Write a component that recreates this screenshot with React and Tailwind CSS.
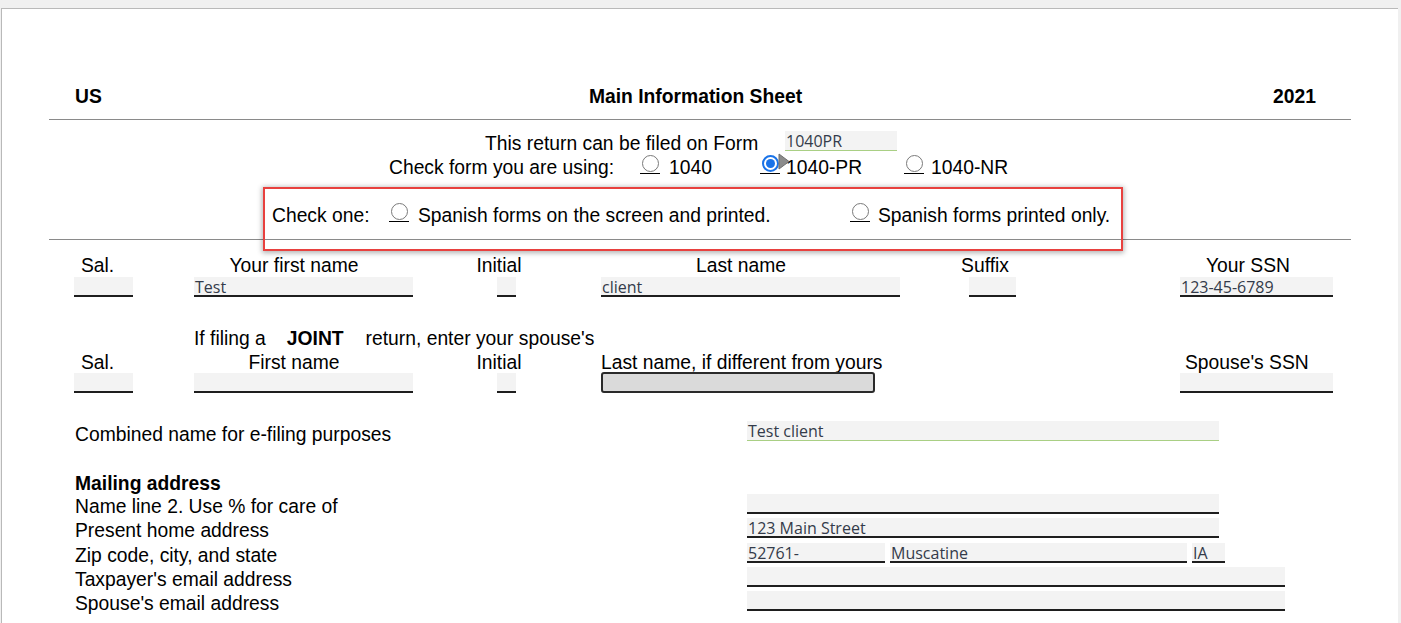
const sans = { fontFamily: '"Liberation Sans", Arial, sans-serif' }

function Field({ w, value, green, className = '' }) {
  return (
    <div
      className={`h-[20px] bg-[#f3f3f3] pl-[1px] text-[16px] leading-[20px] text-[#343b4a] whitespace-nowrap ${
        green ? 'border-b border-[#a9cf84]' : 'border-b-2 border-[#1e1e1e]'
      } ${w} ${className}`}
      style={{ fontFamily: '"Open Sans", "Noto Sans", sans-serif' }}
    >
      {value}
    </div>
  )
}

function Radio({ checked }) {
  return (
    <span className="inline-flex justify-center self-start w-[20px] border-b border-black pb-[1px]">
      {checked ? (
        <span className="w-[17px] h-[17px] rounded-full border-2 border-[#1a73e8] bg-white flex items-center justify-center">
          <span className="w-[9px] h-[9px] rounded-full bg-[#1a73e8]" />
        </span>
      ) : (
        <span className="w-[17px] h-[17px] rounded-full border-[1.5px] border-[#7a7a7a] bg-white" />
      )}
    </span>
  )
}

export default function App() {
  return (
    <div className="w-[1401px] h-[623px] bg-[#f0f0f0] pt-[8px] overflow-hidden text-black" style={sans}>
      <div className="relative ml-[1px] w-[1397px] h-[615px] bg-white border-l border-t border-[#b9b9b9] text-[19.3px] leading-[26px]">
        {/* Header */}
        <div className="mt-[75px] ml-[47px] w-[1302px] h-[36px] border-b border-[#8a8a8a] grid grid-cols-[1fr_auto_1fr] pl-[26px] pr-[35px] font-bold">
          <span>US</span>
          <span>Main Information Sheet</span>
          <span className="text-right">2021</span>
        </div>

        {/* Form selection */}
        <div className="mt-[11px] h-[24px] flex">
          <span className="ml-[483px] w-[300px]">This return can be filed on Form</span>
          <Field w="w-[112px]" value="1040PR" green className="h-[18px] leading-[17px]" />
        </div>
        <div className="h-[24px] flex">
          <span className="ml-[387px] w-[251px]">Check form you are using:</span>
          <Radio />
          <span className="ml-[9px] w-[91px]">1040</span>
          <span className="relative flex self-start">
            <Radio checked />
            <svg className="absolute left-[18px] top-[-2px]" width="12" height="17" viewBox="0 0 12 17">
              <polygon points="1,1 11,8.5 1,16" fill="#8c8c8c" stroke="#6e6e6e" strokeWidth="1" />
            </svg>
          </span>
          <span className="ml-[6px] w-[118px]">1040-PR</span>
          <Radio />
          <span className="ml-[7px]">1040-NR</span>
        </div>

        {/* Spanish forms */}
        <div className="mt-[24px] ml-[47px] w-[1302px] h-[37px] border-b border-[#8a8a8a] flex">
          <span className="ml-[223px] w-[117px]">Check one:</span>
          <Radio />
          <span className="ml-[9px] w-[432px]">Spanish forms on the screen and printed.</span>
          <Radio />
          <span className="ml-[8px]">Spanish forms printed only.</span>
        </div>
        <div className="absolute top-[178px] left-[261px] w-[860px] h-[64px] border-2 border-[#e8413f] shadow-[0_1px_5px_1px_rgba(0,0,0,0.3)]" />

        {/* Taxpayer names */}
        <div className="mt-[13px] h-[24px] flex">
          <span className="ml-[72px] w-[60px] pl-[7px]">Sal.</span>
          <span className="ml-[60px] w-[200px] text-center">Your first name</span>
          <span className="ml-[65px] w-[80px] text-center">Initial</span>
          <span className="ml-[102px] w-[200px] text-center">Last name</span>
          <span className="ml-[104px] w-[80px] text-center">Suffix</span>
          <span className="ml-[143px] w-[160px] text-center">Your SSN</span>
        </div>
        <div className="h-[20px] flex">
          <Field w="ml-[72px] w-[59px]" />
          <Field w="ml-[61px] w-[219px]" value="Test" />
          <Field w="ml-[84px] w-[19px]" />
          <Field w="ml-[85px] w-[299px]" value="client" />
          <Field w="ml-[69px] w-[47px]" />
          <Field w="ml-[164px] w-[153px]" value="123-45-6789" />
        </div>

        {/* Spouse names */}
        <div className="mt-[29px] h-[24px] flex">
          <span className="ml-[192px]">If filing a</span>
          <span className="ml-[21px] font-bold">JOINT</span>
          <span className="ml-[22px]">return, enter your spouse's</span>
        </div>
        <div className="h-[23px] flex">
          <span className="ml-[72px] w-[60px] pl-[7px]">Sal.</span>
          <span className="ml-[60px] w-[200px] text-center">First name</span>
          <span className="ml-[65px] w-[80px] text-center">Initial</span>
          <span className="ml-[62px] w-[420px]">Last name, if different from yours</span>
          <span className="ml-[164px]">Spouse's SSN</span>
        </div>
        <div className="h-[20px] flex">
          <Field w="ml-[72px] w-[59px]" />
          <Field w="ml-[61px] w-[219px]" />
          <Field w="ml-[84px] w-[19px]" />
          <div className="ml-[85px] -mt-[1px] w-[274px] h-[21px] bg-[#dadada] border-2 border-[#2a2a2a] rounded-[3px]" />
          <Field w="ml-[305px] w-[153px]" />
        </div>

        {/* Combined name */}
        <div className="mt-[28px] h-[26px] flex">
          <span className="ml-[73px] w-[672px] mt-[1px]">Combined name for e-filing purposes</span>
          <Field w="w-[472px]" value="Test client" green />
        </div>

        {/* Mailing address */}
        <div className="mt-[24px] h-[23px] ml-[73px] font-bold">Mailing address</div>
        <div className="h-[24px] flex">
          <span className="ml-[73px] w-[672px]">Name line 2. Use % for care of</span>
          <Field w="w-[472px]" />
        </div>
        <div className="h-[25px] flex">
          <span className="ml-[73px] w-[672px]">Present home address</span>
          <Field w="w-[472px]" value="123 Main Street" />
        </div>
        <div className="h-[24px] flex">
          <span className="ml-[73px] w-[672px]">Zip code, city, and state</span>
          <Field w="w-[138px]" value="52761-" />
          <Field w="ml-[5px] w-[297px]" value="Muscatine" />
          <Field w="ml-[5px] w-[33px]" value="IA" />
        </div>
        <div className="h-[24px] flex">
          <span className="ml-[73px] w-[672px]">Taxpayer's email address</span>
          <Field w="w-[538px]" />
        </div>
        <div className="h-[24px] flex">
          <span className="ml-[73px] w-[672px]">Spouse's email address</span>
          <Field w="w-[538px]" />
        </div>
      </div>
    </div>
  )
}
